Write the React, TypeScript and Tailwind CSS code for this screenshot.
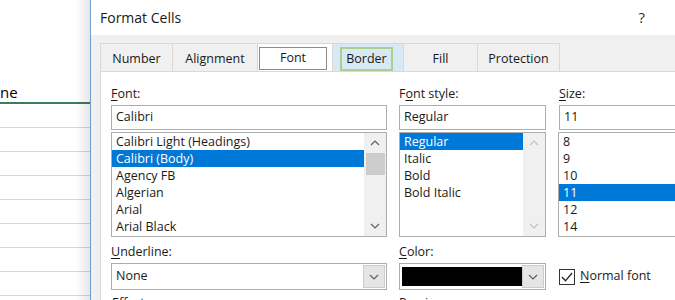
import React from "react";

const Chevron = ({ up = false, color = "#606060" }: { up?: boolean; color?: string }) => (
  <svg width="10" height="6" viewBox="0 0 10 6" className={up ? "rotate-180" : ""}>
    <path d="M1 1 L5 5 L9 1" fill="none" stroke={color} strokeWidth="1.2" />
  </svg>
);

const Label = ({ children }: { children: React.ReactNode }) => (
  <div className="h-[18px] leading-[18px] text-[12.5px] text-[#1a1a1a] whitespace-nowrap">{children}</div>
);

const U = ({ children }: { children: React.ReactNode }) => (
  <span className="underline underline-offset-2">{children}</span>
);

const DropButton = () => (
  <div className="w-[22px] h-[23px] mr-[1px] bg-[#e5e5e5] border border-[#cccccc] flex items-center justify-center">
    <Chevron />
  </div>
);

const Row = ({ text, selected = false }: { text: string; selected?: boolean }) => (
  <div
    className={`h-[17px] leading-[17px] pl-[4px] text-[12.5px] whitespace-nowrap ${
      selected ? "bg-[#0078d7] text-white" : "text-[#1a1a1a]"
    }`}
  >
    {text}
  </div>
);

const fonts = ["Calibri Light (Headings)", "Calibri (Body)", "Agency FB", "Algerian", "Arial", "Arial Black"];
const styles = ["Regular", "Italic", "Bold", "Bold Italic"];
const sizes = ["8", "9", "10", "11", "12", "14"];

const App: React.FC = () => {
  return (
    <div className="w-[675px] h-[300px] overflow-hidden flex bg-white font-['Open_Sans',sans-serif]">
      {/* sheet behind the dialog */}
      <div className="w-[90px] shrink-0 relative">
        <div className="h-[80px]" />
        <div className="h-[24px] border-b-2 border-[#3f7a5a] flex items-end pb-[1px]">
          <span className="text-[15px] leading-[18px] text-black">ne</span>
        </div>
        {Array.from({ length: 8 }).map((_, i) => (
          <div key={i} className="h-[24px] border-b border-[#d6d6d6]" />
        ))}
        <div className="absolute right-0 top-0 h-full w-[14px] bg-gradient-to-r from-transparent to-black/10" />
      </div>

      {/* dialog */}
      <div className="flex-1 flex flex-col border-l border-[#6d9fd2] min-w-0">
        <div className="h-[35px] shrink-0 bg-white flex items-center justify-between pl-[9px] pr-[30px]">
          <span className="text-[14px] text-[#1a1a1a]">Format Cells</span>
          <span className="text-[15px] text-[#333]">?</span>
        </div>

        <div className="flex-1 bg-[#f0f0f0] pl-[9px] pt-[8px] flex flex-col min-h-0">
          {/* tabs */}
          <div className="flex h-[28px] shrink-0 text-[12.5px] text-[#1a1a1a]">
            <div className="w-[72px] border-t border-l border-[#d9d9d9] flex items-center justify-center pt-[4px]">Number</div>
            <div className="w-[85px] border-t border-l border-[#d9d9d9] flex items-center justify-center pt-[4px]">Alignment</div>
            <div className="w-[76px] bg-white border-t border-l border-r border-[#d9d9d9] pl-[1px] pt-[3px]">
              <div className="w-[68px] h-[23px] border border-[#8a8a8a] flex items-center justify-center">Font</div>
            </div>
            <div className="w-[70px] bg-[#d9e8f5] border-t border-[#c4dcf0] pl-[7px] pt-[3px]">
              <div className="w-[53px] h-[24px] border-2 border-[#a9d18e] flex items-center justify-center pt-[1px]">Border</div>
            </div>
            <div className="w-[74px] border-t border-l border-[#d9d9d9] flex items-center justify-center pt-[4px]">Fill</div>
            <div className="w-[83px] border-t border-l border-r border-[#d9d9d9] flex items-center justify-center pt-[4px]">Protection</div>
          </div>

          {/* panel */}
          <div className="flex-1 bg-white border-l border-t border-[#d9d9d9] pl-[10px] pt-[13px] flex items-start gap-[12px] overflow-hidden">
            {/* font */}
            <div className="w-[276px] shrink-0">
              <Label>
                <U>F</U>ont:
              </Label>
              <div className="mt-[2px] h-[25px] border border-[#adadad] pl-[4px] flex items-center text-[12.5px] text-[#1a1a1a]">Calibri</div>
              <div className="mt-[2px] h-[105px] border border-[#adadad] flex">
                <div className="flex-1">
                  {fonts.map((f, i) => (
                    <Row key={f} text={f} selected={i === 1} />
                  ))}
                </div>
                <div className="w-[22px] bg-[#f0f0f0] flex flex-col items-center">
                  <div className="h-[20px] flex items-center justify-center">
                    <Chevron up />
                  </div>
                  <div className="w-[19px] h-[22px] bg-[#cdcdcd]" />
                  <div className="flex-1" />
                  <div className="h-[20px] flex items-center justify-center">
                    <Chevron />
                  </div>
                </div>
              </div>
              <div className="mt-[6px]">
                <Label>
                  <U>U</U>nderline:
                </Label>
              </div>
              <div className="mt-[2px] h-[27px] border border-[#adadad] flex items-center justify-between pl-[4px] text-[12.5px] text-[#1a1a1a]">
                <span>None</span>
                <DropButton />
              </div>
              <div className="mt-[4px] pl-[1px] h-[18px] leading-[18px] text-[12.5px] text-[#1a1a1a]">Effects</div>
            </div>

            {/* font style */}
            <div className="w-[147px] shrink-0">
              <Label>
                F<U>o</U>nt style:
              </Label>
              <div className="mt-[2px] h-[25px] border border-[#adadad] pl-[4px] flex items-center text-[12.5px] text-[#1a1a1a]">Regular</div>
              <div className="mt-[2px] h-[105px] border border-[#adadad] flex">
                <div className="flex-1">
                  {styles.map((s, i) => (
                    <Row key={s} text={s} selected={i === 0} />
                  ))}
                </div>
                <div className="w-[22px] bg-[#f0f0f0] flex flex-col items-center justify-between">
                  <div className="h-[20px] flex items-center justify-center">
                    <Chevron up color="#c2c2c2" />
                  </div>
                  <div className="h-[20px] flex items-center justify-center">
                    <Chevron color="#c2c2c2" />
                  </div>
                </div>
              </div>
              <div className="mt-[6px]">
                <Label>
                  <U>C</U>olor:
                </Label>
              </div>
              <div className="mt-[2px] h-[27px] border border-[#adadad] flex items-center justify-between pl-[2px]">
                <div className="w-[120px] h-[19px] bg-black" />
                <DropButton />
              </div>
              <div className="mt-[4px] h-[18px] leading-[18px] text-[12.5px] text-[#1a1a1a]">Preview</div>
            </div>

            {/* size */}
            <div className="w-[130px] shrink-0">
              <div className="pl-[1px]">
                <Label>
                  <U>S</U>ize:
                </Label>
              </div>
              <div className="mt-[2px] ml-[1px] h-[25px] border border-[#adadad] pl-[4px] flex items-center text-[12.5px] text-[#1a1a1a]">11</div>
              <div className="mt-[2px] h-[105px] border border-[#adadad]">
                {sizes.map((s, i) => (
                  <Row key={s} text={s} selected={i === 3} />
                ))}
              </div>
              <div className="mt-[26px] h-[27px] flex items-center gap-[5px] pl-[1px]">
                <div className="w-[16px] h-[16px] border border-[#333] flex items-center justify-center">
                  <svg width="12" height="10" viewBox="0 0 12 10">
                    <path d="M1 5 L4.5 8.8 L11 1" fill="none" stroke="#222" strokeWidth="1.3" />
                  </svg>
                </div>
                <span className="text-[12.5px] text-[#1a1a1a]">
                  <U>N</U>ormal font
                </span>
              </div>
            </div>
          </div>
        </div>
      </div>
    </div>
  );
};

export default App;
